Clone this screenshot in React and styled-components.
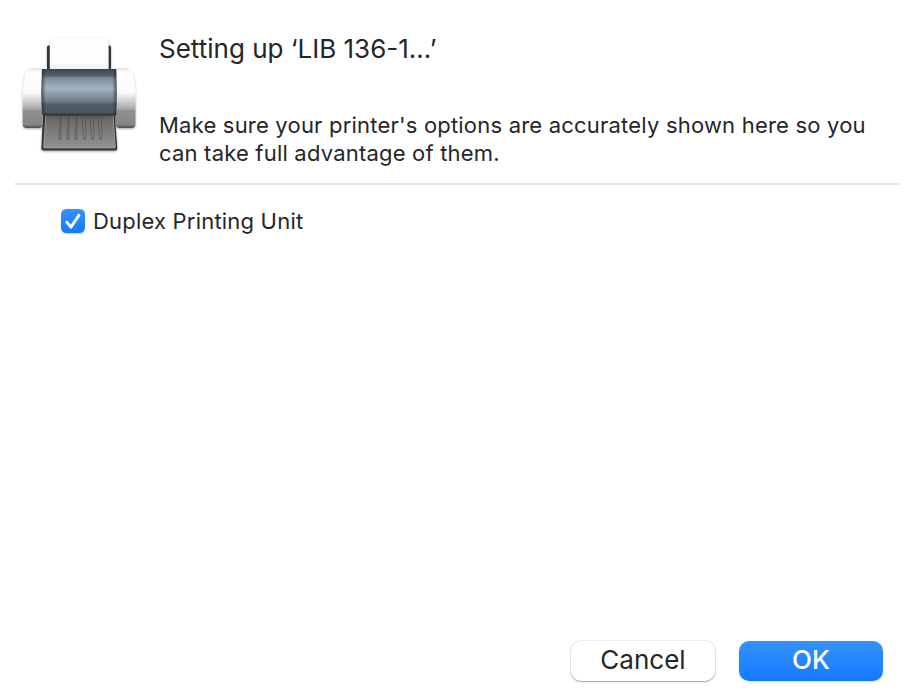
import React, { useState } from "react";
import styled, { createGlobalStyle } from "styled-components";

const GlobalStyle = createGlobalStyle`
  * { box-sizing: border-box; }
  body { margin: 0; background: #fff; }
`;

const Dialog = styled.main`
  display: flex;
  flex-direction: column;
  width: 907px;
  height: 697px;
  background: #fff;
  color: #262626;
  font-family: Inter, "Liberation Sans", sans-serif;
  overflow: hidden;
`;

const Header = styled.header`
  display: flex;
  gap: 15px;
  height: 185px;
  margin: 0 8px 0 15px;
  padding-top: 30px;
  border-bottom: 2px solid #e4e4e4;
`;

const PrinterSvg = styled.svg`
  display: block;
  flex: none;
  width: 129px;
  height: 130px;
`;

const HeaderText = styled.div`
  display: flex;
  flex-direction: column;
  gap: 45px;
  padding-top: 2px;
`;

const Title = styled.h1`
  margin: 0;
  font-size: 26px;
  font-weight: 400;
  line-height: 34px;
  letter-spacing: 0;
  white-space: nowrap;
`;

const Message = styled.p`
  margin: 0;
  font-size: 22px;
  line-height: 28px;
  letter-spacing: 0.2px;
  white-space: nowrap;
`;

const Options = styled.section`
  flex: 1;
  padding: 22px 61px;
`;

const Option = styled.label`
  display: flex;
  align-items: center;
  gap: 8px;
  height: 28px;
  font-size: 22px;
  letter-spacing: 0.2px;
`;

const HiddenCheckbox = styled.input`
  appearance: none;
  grid-area: 1 / 1;
  width: 24px;
  height: 24px;
  margin: 0;
`;

const CheckBox = styled.span`
  display: grid;
  width: 24px;
  height: 24px;
  border-radius: 5.5px;
  background: ${(p) => (p.$on ? "linear-gradient(#3592fc, #147aff)" : "#fff")};
  box-shadow: ${(p) => (p.$on ? "0 0.5px 1px #147aff50" : "inset 0 0 0 1px #bbb")};
`;

const Tick = styled.svg`
  grid-area: 1 / 1;
  width: 24px;
  height: 24px;
  pointer-events: none;
`;

const Footer = styled.footer`
  display: flex;
  justify-content: flex-end;
  gap: 24px;
  padding: 0 24px 16px 0;
`;

const Button = styled.button`
  width: 144px;
  height: 40px;
  padding: 0 0 2px;
  border: 0;
  border-radius: 10px;
  font: 400 26px/38px Inter, "Liberation Sans", sans-serif;
  letter-spacing: 0;
  color: ${(p) => (p.$primary ? "#fff" : "#262626")};
  font-weight: ${(p) => (p.$primary ? 500 : 400)};
  background: ${(p) => (p.$primary ? "linear-gradient(#3592fc, #147aff)" : "#fff")};
  box-shadow: ${(p) =>
    p.$primary
      ? "0 1px 2px #147aff38"
      : "0 0 0 1px #0000000f, 0 1px 1px #00000038, 0 1px 3px #0000001c"};
`;

function PrinterIcon() {
  return (
    <PrinterSvg viewBox="15 30 129 130" aria-hidden="true">
      <defs>
        <linearGradient id="side" x2="0" y2="1">
          <stop offset="0" stopColor="#f1f1f1" />
          <stop offset="0.08" stopColor="#fff" />
          <stop offset="0.4" stopColor="#fafafa" />
          <stop offset="0.68" stopColor="#a8a8a8" />
          <stop offset="0.7" stopColor="#919191" />
          <stop offset="0.94" stopColor="#858585" />
          <stop offset="1" stopColor="#4b4b4b" />
        </linearGradient>
        <linearGradient id="roller" x2="0" y2="1">
          <stop offset="0" stopColor="#3e454c" />
          <stop offset="0.14" stopColor="#535e68" />
          <stop offset="0.2" stopColor="#7d8b98" />
          <stop offset="0.43" stopColor="#a4b4c3" />
          <stop offset="0.7" stopColor="#74818c" />
          <stop offset="0.79" stopColor="#505b65" />
          <stop offset="0.95" stopColor="#4d5760" />
          <stop offset="1" stopColor="#343b42" />
        </linearGradient>
        <linearGradient id="edges">
          <stop offset="0" stopColor="#192128" stopOpacity=".65" />
          <stop offset="0.06" stopColor="#192128" stopOpacity="0" />
          <stop offset="0.94" stopColor="#192128" stopOpacity="0" />
          <stop offset="1" stopColor="#192128" stopOpacity=".65" />
        </linearGradient>
        <linearGradient id="tray" x2="0" y2="1">
          <stop offset="0" stopColor="#555" />
          <stop offset="0.25" stopColor="#707070" />
          <stop offset="1" stopColor="#929292" />
        </linearGradient>
        <linearGradient id="paper" x2="0" y2="1">
          <stop offset="0" stopColor="#fff" />
          <stop offset="0.75" stopColor="#fdfdfd" />
          <stop offset="1" stopColor="#ededed" />
        </linearGradient>
        <filter id="shadow" x="-10%" y="-10%" width="120%" height="125%">
          <feDropShadow dx="0" dy="1" stdDeviation="1.2" floodOpacity=".35" />
        </filter>
      </defs>
      <g filter="url(#shadow)">
        <path d="M47 70V47q0-1.5 1.5-1.5h61q1.5 0 1.5 1.5v23z" fill="#353535" />
        <path d="M49.8 70V39q0-.8.8-.8h57.2q.8 0 .8.8v31z" fill="url(#paper)" />
        <path d="M43 112h72.5v12l1.8 24q0 2.5-2.5 2.5H43.7q-2.5 0-2.3-2.5z" fill="#353535" />
        <path d="M42.5 69H31q-4 0-5.3 4.2Q22.5 84 22.7 97v27q0 4 4 4H39q3.5 0 3.5-4z" fill="url(#side)" />
        <path d="M116 69h11.3q4 0 5.2 4.2 3.2 10.8 3 23.8v27q0 4-4 4h-12q-3.5 0-3.5-4z" fill="url(#side)" />
      </g>
      <path d="M45.7 114h67.5l2.1 34H43.5z" fill="url(#tray)" />
      <path d="M46 115l-2.4 32M113 115l2.4 32" stroke="#aaa" strokeWidth=".7" />
      <path d="M43.5 148h71.8" stroke="#b0b0b0" strokeWidth=".6" />
      <g fill="none" stroke="#505050" strokeWidth=".65">
        {[60, 68, 76, 82.5, 90.5, 98.5].map((x, i) => (
          <path key={x} d={`M${x + (i < 3 ? 0.8 : -0.8)} 115L${x - (i < 3 ? 1.2 : -1.2)} 139.5h2V115`} />
        ))}
      </g>
      <path d="M43 114h73v2H43z" fill="#292e32" opacity=".6" />
      <path d="M42 69h74.2q1.2 22.5 0 45.5H42q-1.5-22.5 0-45.5z" fill="url(#roller)" />
      <path d="M42 69h74.2q1.2 22.5 0 45.5H42q-1.5-22.5 0-45.5z" fill="url(#edges)" />
      <path d="M31 68.9h11M116.5 68.9h11" stroke="#bbb" strokeWidth=".6" />
    </PrinterSvg>
  );
}

export default function App() {
  const [duplex, setDuplex] = useState(true);
  return (
    <Dialog>
      <GlobalStyle />
      <Header>
        <PrinterIcon />
        <HeaderText>
          <Title>Setting up ‘LIB 136-1...’</Title>
          <Message>
            Make sure your printer's options are accurately shown here so you
            <br />
            can take full advantage of them.
          </Message>
        </HeaderText>
      </Header>
      <Options>
        <Option>
          <CheckBox $on={duplex}>
            <HiddenCheckbox type="checkbox" checked={duplex} onChange={(e) => setDuplex(e.target.checked)} />
            {duplex && (
              <Tick viewBox="0 0 24 24">
                <path d="M5.8 13.1l4.1 5L18 6.2" fill="none" stroke="#fff" strokeWidth="2.9" strokeLinecap="round" strokeLinejoin="round" />
              </Tick>
            )}
          </CheckBox>
          Duplex Printing Unit
        </Option>
      </Options>
      <Footer>
        <Button type="button">Cancel</Button>
        <Button type="button" $primary>OK</Button>
      </Footer>
    </Dialog>
  );
}
